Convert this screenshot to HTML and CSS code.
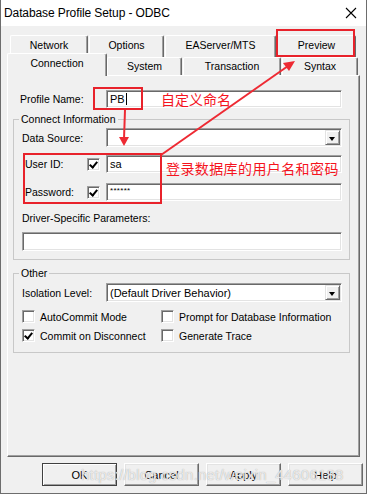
FILE: index.html
```html
<!DOCTYPE html>
<html lang="zh-CN">
<head>
    <meta charset="UTF-8">
    <meta name="viewport" content="width=device-width, initial-scale=1.0">
    <title>Database Profile Setup - ODBC</title>
    <link rel="stylesheet" href="styles.css">
</head>
<body>

    <div class="window">
        <!-- Barre de titre -->
        <div class="titlebar">
            <span class="title">Database Profile Setup - ODBC</span>
            <svg class="close" width="12" height="12" viewBox="0 0 12 12">
                <path d="M1 1L11 11M11 1L1 11" stroke="#000" stroke-width="1.1" fill="none"/>
            </svg>
        </div>

        <!-- Onglets -->
        <div class="tabs">
            <div class="tab-row row-top">
                <div class="tab t-network">Network</div>
                <div class="tab t-options">Options</div>
                <div class="tab t-easerver">EAServer/MTS</div>
                <div class="tab t-preview">Preview</div>
            </div>
            <div class="tab-row row-bottom">
                <div class="tab t-connection active">Connection</div>
                <div class="tab t-system">System</div>
                <div class="tab t-transaction">Transaction</div>
                <div class="tab t-syntax">Syntax</div>
            </div>
        </div>

        <!-- Page Connection -->
        <div class="panel">
            <div class="row profile-row">
                <span class="lbl">Profile Name:</span>
                <div class="edit"><span class="val">PB</span><span class="caret"></span></div>
            </div>

            <fieldset class="group group-connect">
                <legend>Connect Information</legend>
                <div class="row row-combo">
                    <span class="lbl">Data Source:</span>
                    <div class="combo"><span class="val"></span><span class="drop"></span></div>
                </div>
                <div class="row row-user">
                    <span class="lbl lbl-short">User ID:</span>
                    <span class="check on"></span>
                    <div class="edit"><span class="val">sa</span></div>
                </div>
                <div class="row row-pass">
                    <span class="lbl lbl-short">Password:</span>
                    <span class="check on"></span>
                    <div class="edit"><span class="val stars">******</span></div>
                </div>
                <div class="plain-lbl">Driver-Specific Parameters:</div>
                <div class="edit edit-wide"></div>
            </fieldset>

            <fieldset class="group group-other">
                <legend>Other</legend>
                <div class="row row-combo">
                    <span class="lbl">Isolation Level:</span>
                    <div class="combo"><span class="val">(Default Driver Behavior)</span><span class="drop"></span></div>
                </div>
                <div class="check-grid">
                    <label class="opt"><span class="check"></span>AutoCommit Mode</label>
                    <label class="opt"><span class="check"></span>Prompt for Database Information</label>
                    <label class="opt"><span class="check on"></span>Commit on Disconnect</label>
                    <label class="opt"><span class="check"></span>Generate Trace</label>
                </div>
            </fieldset>
        </div>

        <!-- Boutons -->
        <div class="buttons">
            <button class="btn default">OK</button>
            <button class="btn">Cancel</button>
            <button class="btn">Apply</button>
            <button class="btn">Help</button>
        </div>

        <!-- Annotations rouges par-dessus la capture -->
        <div class="mark mark-preview"></div>
        <div class="mark mark-profile"></div>
        <div class="mark mark-login"></div>
        <div class="note note-name">自定义命名</div>
        <div class="note note-login">登录数据库的用户名和密码</div>
        <svg class="arrows" width="367" height="494" viewBox="0 0 367 494">
            <line x1="124" y1="110" x2="123" y2="139" stroke="#ee2a33" stroke-width="2"/>
            <polygon points="118,137 128,137 123,146" fill="#ee2a33"/>
            <line x1="160" y1="155" x2="287" y2="66" stroke="#ee2a33" stroke-width="2"/>
            <polygon points="294,61 282,63 288,71" fill="#ee2a33"/>
        </svg>

        <div class="watermark">https://blog.csdn.net/weixin_44606188</div>
    </div>

</body>
</html>
```

FILE: styles.css
```css
/* Style général */
body {
    margin: 0;
    background: #f0f0f0;
    font-family: "Liberation Sans", Arial, sans-serif;
    font-size: 10.5px;
    color: #000;
}
.window {
    position: relative;
    width: 367px;
    height: 494px;
    box-sizing: border-box;
    background: #f0f0f0;
    border: 1px solid #6d6d6d;
    border-top: none;
    overflow: hidden;
}
.titlebar {
    height: 26px;
    background: #fff;
    display: flex;
    align-items: center;
    justify-content: space-between;
    padding: 0 9px 0 3px;
}
.title {
    font-size: 12px;
    letter-spacing: -0.1px;
}

/* Onglets */
.tabs {
    padding-top: 9px;
}
.tab-row {
    display: flex;
    height: 22px;
}
.row-bottom {
    margin-top: -4px;
    align-items: flex-end;
    position: relative;
}
.tab {
    box-sizing: border-box;
    height: 22px;
    padding-top: 3px;
    text-align: center;
    background: #f0f0f0;
    border-top: 1px solid #fff;
    border-left: 1px solid #fff;
    border-right: 1px solid #696969;
    box-shadow: inset -1px 0 #a0a0a0;
    border-radius: 2px 2px 0 0;
}
.row-bottom .tab {
    height: 18px;
    padding-top: 2px;
}
.row-bottom .tab.active {
    height: 23px;
    margin-bottom: -1px;
    padding-top: 3px;
    position: relative;
    z-index: 2;
}
.t-network { margin-left: 9px; width: 78px; }
.t-options { margin-left: 1px; width: 75px; }
.t-easerver { margin-left: 1px; width: 111px; }
.t-preview { margin-left: 1px; width: 79px; }
.t-connection { margin-left: 6px; width: 100px; }
.t-system { width: 75px; }
.t-transaction { margin-left: 1px; width: 98px; }
.t-syntax { margin-left: 1px; width: 76px; }

/* Page */
.panel {
    position: relative;
    margin-left: 6px;
    width: 353px;
    height: 382px;
    box-sizing: border-box;
    border: 1px solid;
    border-color: #fff #696969 #696969 #fff;
    box-shadow: inset -1px -1px #a0a0a0;
}
.row {
    display: flex;
    align-items: center;
}
.profile-row {
    margin-top: 14px;
    padding-left: 12px;
    height: 18px;
}
.profile-row .lbl {
    width: 86px;
}
.edit, .combo {
    position: relative;
    box-sizing: border-box;
    width: 236px;
    height: 18px;
    background: #fff;
    border: 1px solid;
    border-color: #a0a0a0 #fff #fff #a0a0a0;
    box-shadow: inset 1px 1px #696969, inset -1px -1px #e3e3e3;
    display: flex;
    align-items: center;
    padding-left: 3px;
    font-size: 11px;
}
.combo {
    height: 19px;
}
.caret {
    width: 1px;
    height: 12px;
    background: #000;
    margin-left: 1px;
}
.drop {
    position: absolute;
    right: 1px;
    top: 1px;
    bottom: 1px;
    width: 15px;
    box-sizing: border-box;
    background: #f0f0f0;
    border: 1px solid;
    border-color: #e3e3e3 #696969 #696969 #e3e3e3;
    box-shadow: inset 1px 1px #fff, inset -1px -1px #a0a0a0;
}
.drop::after {
    content: "";
    position: absolute;
    left: 3px;
    top: 6px;
    border-left: 3.5px solid transparent;
    border-right: 3.5px solid transparent;
    border-top: 4px solid #000;
}
.stars {
    font-size: 8px;
    letter-spacing: 0.3px;
    margin-top: -4px;
}

/* Cadres */
.group {
    margin: 0 0 0 5px;
    width: 337px;
    box-sizing: border-box;
    border: 1px solid #c8c8c8;
    padding: 3px 6px 8px 8px;
    min-width: 0;
}
.group legend {
    padding: 0 2px;
    margin-left: -3px;
    line-height: 12px;
    background: #f0f0f0;
}
.group-connect {
    margin-top: 5px;
}
.group-other {
    margin-top: 7px;
    padding-top: 4px;
    padding-bottom: 10px;
}
.row-combo .lbl {
    width: 84px;
}
.row-user, .row-pass {
    height: 18px;
}
.row-user {
    margin-top: 8px;
}
.row-pass {
    margin-top: 10px;
}
.lbl-short {
    width: 62px;
    padding-left: 3px;
}
.row-user .edit, .row-pass .edit {
    margin-left: 6px;
}
.plain-lbl {
    margin-top: 11px;
    line-height: 12px;
}
.edit-wide {
    margin-top: 8px;
    width: 320px;
    height: 19px;
}

/* Cases à cocher */
.check {
    flex: none;
    width: 13px;
    height: 13px;
    box-sizing: border-box;
    background: #fff;
    border: 1px solid;
    border-color: #a0a0a0 #fff #fff #a0a0a0;
    box-shadow: inset 1px 1px #696969, inset -1px -1px #e3e3e3;
    position: relative;
}
.check.on::after {
    content: "";
    position: absolute;
    left: 3px;
    top: 1px;
    width: 3px;
    height: 6px;
    border-right: 2px solid #000;
    border-bottom: 2px solid #000;
    transform: rotate(40deg);
}
.check-grid {
    display: grid;
    grid-template-columns: 139px auto;
    row-gap: 6px;
    margin-top: 8px;
}
.opt {
    display: flex;
    align-items: center;
    gap: 5px;
    height: 13px;
}

/* Boutons */
.buttons {
    display: flex;
    gap: 7px;
    margin: 6px 0 0 41px;
}
.btn {
    width: 75px;
    height: 23px;
    box-sizing: border-box;
    background: #f0f0f0;
    border: 1px solid;
    border-color: #fff #696969 #696969 #fff;
    box-shadow: inset -1px -1px #a0a0a0, inset 1px 1px #e3e3e3;
    font-family: "Liberation Sans", Arial, sans-serif;
    font-size: 11px;
    padding: 0;
}
.btn.default {
    border-color: #404040;
    box-shadow: inset 1px 1px #fff, inset -1px -1px #a0a0a0;
}

/* Annotations */
.mark {
    position: absolute;
    border: 2px solid #e8222b;
    box-sizing: border-box;
}
.mark-preview { left: 275px; top: 29px; width: 79px; height: 28px; }
.mark-profile { left: 92px; top: 87px; width: 50px; height: 23px; }
.mark-login { left: 22px; top: 153px; width: 139px; height: 51px; }
.note {
    position: absolute;
    color: #f5141e;
    font-family: "Noto Sans CJK SC", sans-serif;
    font-size: 14px;
    line-height: 16px;
}
.note-name { left: 160px; top: 91px; }
.note-login { left: 165px; top: 160px; letter-spacing: 0.4px; }
.arrows {
    position: absolute;
    left: 0;
    top: 0;
    pointer-events: none;
}
.watermark {
    position: absolute;
    left: 80px;
    top: 466px;
    font-size: 15px;
    color: rgba(255, 255, 255, 0.75);
    text-shadow: 0 0 1px #9a9a9a;
    letter-spacing: 0.2px;
}
```
